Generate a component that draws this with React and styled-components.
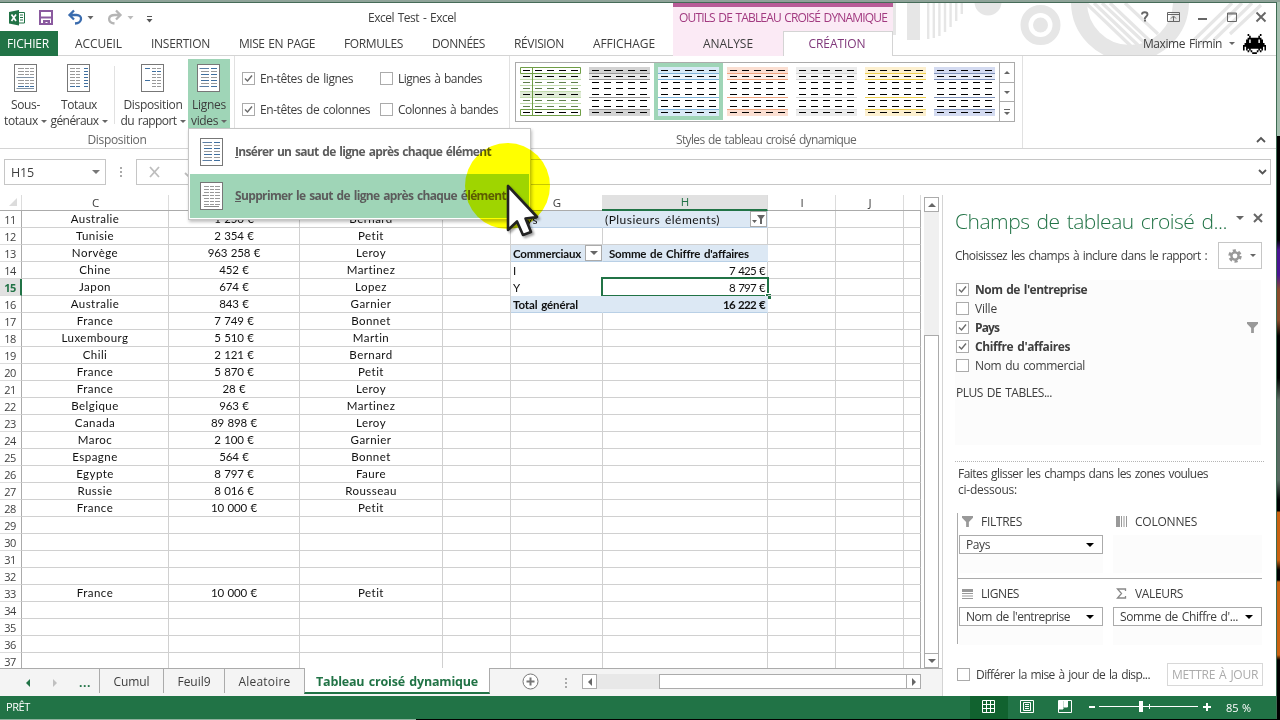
import { useLayoutEffect, useRef, useState } from 'react';
import styled, { createGlobalStyle, css } from 'styled-components';

const GlobalStyle = createGlobalStyle`
  * {
    box-sizing: border-box;
  }

  body {
    margin: 0;
    background: #000;
    overflow: hidden;
  }
`;

const UI_FONT = '"Open Sans", "Noto Sans", sans-serif';
const CELL_FONT = 'Lato, "Open Sans", sans-serif';

// ---------- Shared parts ----------

const Text = styled.span`
  display: inline-block;
  flex: none;
  white-space: pre;
  word-spacing: 0.1em;
  font-size: ${(p) => p.$size || 12}px;
  font-weight: ${(p) => (p.$bold ? 700 : p.$light ? 300 : 400)};
  color: ${(p) => p.$color || 'inherit'};
`;

// Spreads the letters so that a label keeps the same width with any fallback font
function Label({ w, children, ...props }) {
  const ref = useRef(null);
  const [spacing, setSpacing] = useState(0);

  useLayoutEffect(() => {
    if (!w) return;
    const natural = ref.current.getBoundingClientRect().width;
    setSpacing((w - natural) / ref.current.textContent.length);
  }, [w]);

  return (
    <Text ref={ref} style={{ letterSpacing: `${spacing}px` }} {...props}>
      {children}
    </Text>
  );
}

const Arrow = styled.i`
  flex: none;
  width: 0;
  height: 0;
  border: ${(p) => p.$size || 3}px solid transparent;
  ${(p) =>
    ({
      up: css`border-top: 0; border-bottom-color: ${p.$color || '#666'};`,
      down: css`border-bottom: 0; border-top-color: ${p.$color || '#666'};`,
      left: css`border-left: 0; border-right-color: ${p.$color || '#666'};`,
      right: css`border-right: 0; border-left-color: ${p.$color || '#666'};`,
    })[p.$dir || 'down']}
`;

const Box = styled.span`
  flex: none;
  display: flex;
  width: 13px;
  height: 13px;
  border: 1px solid #ababab;
  background: #fff;
`;

function Check({ on }) {
  return (
    <Box>
      {on && (
        <svg width="11" height="11" viewBox="0 0 11 11">
          <path d="M2 5.5 L4.5 8 L9 2.5" fill="none" stroke="#6a6a6a" strokeWidth="1.4" />
        </svg>
      )}
    </Box>
  );
}

const Desktop = styled.div`
  position: relative;
  display: flex;
  width: 1280px;
  height: 720px;
  padding: 2px 0 0;
  overflow: hidden;
  font-family: ${UI_FONT};
  color: #3e3e3e;
  background: linear-gradient(
    #8fa399 0 2px, #a5c0b0 2px 136px, #000 136px 240px, #4a1590 250px 275px, #8a4a2a 290px 320px,
    #000 336px 378px, #5a6b62 400px 480px, #000 500px 511px, #c9600f 512px 560px, #000 570px 580px,
    #c9600f 582px 655px, #000 660px
  );
`;

const Window = styled.div`
  display: flex;
  flex-direction: column;
  width: 1277px;
  height: 717px;
  border-top: 1px solid #456b58;
  border-right: 1px solid #3d6b52;
  background: #fff;
`;

// ---------- Title bar and tabs ----------

const Header = styled.header`
  position: relative;
  flex: none;
  display: flex;
  height: 53px;
  border-bottom: 1px solid #d4d4d4;
`;

const Backdrop = styled.svg`
  position: absolute;
  top: 0;
  left: 0;
`;

const HeaderMain = styled.div`
  width: 673px;
`;

const TitleRow = styled.div`
  display: flex;
  align-items: center;
  height: 28px;
`;

const QuickBar = styled.div`
  display: flex;
  width: 368px;
`;

const TabRow = styled.div`
  display: flex;
  height: 25px;
`;

const Tab = styled.div`
  display: flex;
  align-items: center;
  justify-content: center;
  width: ${(p) => p.$w}px;
  height: 25px;
  ${(p) => p.$file && css`
    margin-right: 2.5px;
    padding-right: 2px;
    color: #fff;
    background: #217346;
  `}
  ${(p) => p.$active && css`
    position: relative;
    padding: 0 2px 2px 0;
    color: #80397b;
    background: #fff;
    border: 1px solid #d4d4d4;
    border-bottom: 0;
  `}
`;

const ContextTabs = styled.div`
  position: relative;
  width: 220px;
  height: 53px;
  border-top: 4px solid #b85c97;
  background: #fbeaf5;
`;

const ContextTitle = styled.div`
  display: flex;
  align-items: center;
  justify-content: center;
  height: 24px;
  padding-bottom: 3px;
  color: #a23a80;
`;

const HeaderSide = styled.div`
  position: relative;
  flex: 1;
`;

const WindowButtons = styled.div`
  position: relative;
  display: flex;
  align-items: center;
  justify-content: flex-end;
  height: 28px;
  padding-right: 7px;
`;

const Account = styled.div`
  position: relative;
  display: flex;
  align-items: center;
  justify-content: flex-end;
  height: 25px;
  padding-right: 10px;
`;

const UserArrow = styled.span`
  display: flex;
  padding: 0 8px 0 7px;
`;

const tabs = [
  ['ACCUEIL', 76, 47],
  ['INSERTION', 88, 59],
  ['MISE EN PAGE', 105, 76],
  ['FORMULES', 88, 59],
  ['DONNÉES', 82, 53],
  ['RÉVISION', 79, 50],
  ['AFFICHAGE', 91, 62],
];

function QuickIcons() {
  return (
    <svg width="160" height="26" viewBox="0 0 160 26">
      {/* Excel */}
      <path d="M9 8 L19 6 V21.5 L9 19.5 Z" fill="#217346" />
      <path d="M19 8.5 H24.5 V19 H19" fill="#fff" stroke="#217346" />
      <path d="M20 11 h3 M20 13.5 h3 M20 16 h3" stroke="#217346" />
      <path d="M11.5 10.5 L16 17 M16 10.5 L11.5 17" stroke="#fff" strokeWidth="1.7" />
      {/* Save */}
      <path d="M40 7 H52 V20 H40 Z" fill="#fff" stroke="#8a5a9f" strokeWidth="2" />
      <path d="M40 13.5 H52" stroke="#8a5a9f" strokeWidth="2" />
      <path d="M43 16 H50 V21 H47.5 V18 H45.5 V21 H43 Z" fill="#8a5a9f" />
      {/* Undo, redo */}
      <path d="M74 6.5 L69.5 11 L74 15.5 M70 11 H76.5 C83 11 82.5 19 75 19.5" fill="none" stroke="#3a6cae" strokeWidth="2.3" />
      <path d="M87.5 12 h6 l-3 3.5z" fill="#666" />
      <path d="M116 6.5 L120.5 11 L116 15.5 M120 11 H115 C107.5 11 107 18.5 114.5 19.5" fill="none" stroke="#b5b5b5" strokeWidth="2.3" />
      <path d="M127.5 12 h6 l-3 3.5z" fill="#bbb" />
      <path d="M147 12.5 h5" stroke="#555" />
      <path d="M146.5 15 h6 l-3 3.5z" fill="#555" />
    </svg>
  );
}

function HeaderPattern() {
  return (
    <Backdrop width="383" height="52" viewBox="893 3 383 52" fill="#e6e6e6">
      <path d="M893 3h3v32h-3z M907 3h13v37h-13z" />
      {[36, 35, 33, 29, 24, 18, 11].map((h, i) => (
        <rect key={h} x={927 + i * 5.6} y="3" width="2.4" height={h} />
      ))}
      <circle cx="988" cy="2" r="13.5" />
      <circle cx="1040.5" cy="25" r="16" fill="none" stroke="#e6e6e6" strokeWidth="8" />
      <circle cx="1040.5" cy="25" r="7.5" />
      <circle cx="1130" cy="2" r="51" fill="none" stroke="#e6e6e6" strokeWidth="16" />
      <g stroke="#e6e6e6" strokeWidth="3.2">
        <path d="M1086 3 L1134 49 M1094 3 L1140 47 M1102 3 L1148 46 M1110 3 L1151 42 M1125 3 L1158 34" />
        <path d="M1193 41 L1232 3 M1200 44 L1242 3 M1214 40 L1252 3 M1230 34 L1261 5" />
      </g>
    </Backdrop>
  );
}

// User picture: a small pixel sprite
const sprite = [
  '000100000001000',
  '000010000010000',
  '000111111111000',
  '001101111101100',
  '001101111101100',
  '011111111111110',
  '111111111111111',
  '101111111111101',
  '101010000010101',
  '000101000101000',
  '000000111000000',
];

function Invader() {
  return (
    <svg width="23" height="20" viewBox="0 0 15 11" preserveAspectRatio="none">
      <path
        d={sprite.map((r, y) => [...r].map((c, x) => (c === '1' ? `M${x} ${y}h1.05v1.05h-1.05z` : '')).join('')).join('')}
      />
    </svg>
  );
}

function TopBar() {
  return (
    <Header>
      <HeaderMain>
        <TitleRow>
          <QuickBar>
            <QuickIcons />
          </QuickBar>
          <Label w={88}>Excel Test - Excel</Label>
        </TitleRow>
        <TabRow>
          <Tab $w={58} $file><Label w={42}>FICHIER</Label></Tab>
          {tabs.map(([name, width, w]) => (
            <Tab key={name} $w={width}><Label w={w}>{name}</Label></Tab>
          ))}
        </TabRow>
      </HeaderMain>
      <ContextTabs>
        <ContextTitle><Label w={208}>OUTILS DE TABLEAU CROISÉ DYNAMIQUE</Label></ContextTitle>
        <TabRow>
          <Tab $w={110}><Label w={50}>ANALYSE</Label></Tab>
          <Tab $w={110} $active><Label w={57}>CRÉATION</Label></Tab>
        </TabRow>
      </ContextTabs>
      <HeaderSide>
        <HeaderPattern />
        <WindowButtons>
          <svg width="130" height="28" viewBox="1139 3 130 28" fill="none" stroke="#666">
            <path d="M1142 14.5 C1142 11.5 1147.5 11.5 1147.5 14.5 C1147.5 16.5 1144.8 16.5 1144.8 19" strokeWidth="1.9" />
            <path d="M1144 20.5 h2" strokeWidth="2" />
            <path d="M1167.5 12.5 h12 v9 h-12z M1167.5 14.5 h12 M1173.5 21 v-4.5 M1171 18.5 l2.5 -2.5 l2.5 2.5" />
            <path d="M1198 19 h9" strokeWidth="2" />
            <path d="M1227.5 13 h9 v8.5 h-9z M1227 14 h10" />
            <path d="M1256.5 12.5 l9 9 M1265.5 12.5 l-9 9" strokeWidth="1.9" />
          </svg>
        </WindowButtons>
        <Account>
          <Label w={79}>Maxime Firmin</Label>
          <UserArrow><Arrow /></UserArrow>
          <Invader />
        </Account>
      </HeaderSide>
    </Header>
  );
}

// ---------- Ribbon ----------

const Ribbon = styled.section`
  position: relative;
  flex: none;
  display: flex;
  height: 93px;
  border-bottom: 1px solid #d4d4d4;
`;

const Group = styled.div`
  display: flex;
  flex-direction: column;
  justify-content: space-between;
  width: ${(p) => p.$w}px;
  padding: 3px 0 1px;
  border-right: 1px solid #e1e1e1;
`;

const GroupLabel = styled.div`
  display: flex;
  justify-content: center;
  line-height: 15px;
  color: #666;
`;

const BigButtons = styled.div`
  display: flex;
`;

const BigButton = styled.div`
  display: flex;
  flex-direction: column;
  align-items: center;
  width: ${(p) => p.$w}px;
  height: 70px;
  padding-top: 5px;
  margin-left: ${(p) => p.$left || 0}px;
  line-height: 16px;
  background: ${(p) => (p.$on ? '#9fd5b7' : 'none')};

  svg {
    margin: 0 1px 5px 0;
  }
`;

const WithArrow = styled.span`
  display: flex;
  align-items: center;
  gap: 3px;
`;

const Divider = styled.i`
  width: 1px;
  height: 58px;
  margin: 7px 0 0 4px;
  background: #e1e1e1;
`;

const Options = styled.div`
  display: grid;
  grid-template-columns: 138px 1fr;
  grid-auto-rows: 31px;
  padding: 4px 0 0 7px;
`;

const Option = styled.label`
  display: flex;
  align-items: center;
  gap: 5px;
`;

const Gallery = styled.div`
  display: flex;
  width: 500px;
  height: 60px;
  margin: 3px 0 0 5px;
  border: 1px solid #ababab;
`;

const Thumb = styled.div`
  display: flex;
  justify-content: center;
  width: 69px;
  height: 57px;
  border: 4px solid ${(p) => (p.$on ? '#9fd5b7' : 'transparent')};
`;

const GallerySide = styled.div`
  display: grid;
  grid-template-rows: 20px 19px 19px;
  width: 15px;
  border-left: 1px solid #ababab;
`;

const GalleryButton = styled.div`
  display: flex;
  flex-direction: column;
  align-items: center;
  justify-content: center;
  gap: 2px;
  border-bottom: 1px solid #ababab;

  &:last-child {
    border-bottom: 0;
  }
`;

const Bar = styled.i`
  width: 6px;
  height: 1px;
  background: #666;
`;

const Collapse = styled.div`
  display: flex;
  flex: 1;
  align-items: flex-end;
  justify-content: flex-end;
  padding: 0 10px 4px 0;
`;

const iconColumns = {
  sub: [[4, 6], [11, 4], [16, 4]],
  totals: [[3, 5], [9, 4], [17, 4]],
  layout: [[4, 5], [11, 4], [16, 4]],
  blank: [[4, 8], [14, 6]],
  dense: [[4, 5], [10, 4], [15, 5]],
};

function isBlue(kind, row, col) {
  if (kind === 'sub') return row === 3 || row === 6;
  if (kind === 'totals') return col === 2 || row === 6;
  if (kind === 'layout') return col === 0 || row === 1;
  return kind === 'blank' && row % 2 === 0;
}

function PageIcon({ kind }) {
  return (
    <svg width="23" height="28" viewBox="0 0 23 28">
      <rect x="0.5" y="0.5" width="22" height="27" fill="#fff" stroke="#777" />
      {[4, 7, 10, 13, 16, 19, 22].map((y, row) =>
        iconColumns[kind].map(([x, w], col) => {
          if (kind === 'layout' && col === 0 && row !== 0 && row !== 4) return null;
          return (
            <rect key={`${x}-${y}`} x={x} y={y} width={w} height="1" fill={isBlue(kind, row, col) ? '#3f6f9f' : '#999'} />
          );
        })
      )}
      {kind === 'sub' && <path d="M2.5 13.5 H20 M2.5 24.5 H20" stroke="#7f92a6" />}
      {kind === 'blank' && <path d="M2.5 4.5 H12 M2.5 22.5 H12" stroke="#5b7ea4" />}
      {kind === 'dense' && <path d="M2.5 13.5 H6 M4 24.5 h15" stroke="#888" />}
    </svg>
  );
}

const styles = [
  { fill: '#fff', line: '#6f9e45', green: true },
  { fill: '#d3d3d3', line: '#999' },
  { fill: '#d9eaf6', line: '#7fb3d9', on: true },
  { fill: '#fbdfd2', line: '#f0a581' },
  { fill: '#ececec', line: '#d8d8d8' },
  { fill: '#fdf0cf', line: '#efd04f' },
  { fill: '#d4dbf1', line: '#8093ba' },
];

function StyleThumb({ fill, line, green }) {
  return (
    <svg width="61" height="49" viewBox="0 0 61 49">
      <rect width="61" height="7" fill={fill} />
      <rect y="7" width="61" height="6" fill={green ? '#e6efdf' : fill} opacity=".5" />
      <rect y="42" width="61" height="7" fill={fill} />
      {green ? (
        <g fill="none" stroke={line}>
          <path d="M0 12.5 H61 M0 18.5 H61 M0 24.5 H61 M0 30.5 H61 M0 36.5 H61" stroke="#c3dcae" />
          <path d="M0 27.5 H61" stroke="#e0ebd7" strokeWidth="5" />
          <path d="M.5 .5 H60.5 V6.5 H.5 Z M.5 42.5 H60.5 V48.5 H.5 Z M12.5 0 V49" />
        </g>
      ) : (
        <path d="M0 6.5 H61 M0 12.5 H61 M0 30.5 H61 M0 42.5 H61" stroke={line} />
      )}
      {[0, 1, 2, 3, 4, 5, 6, 7].map((r) => (
        <path
          key={r}
          d={`M3 ${3.5 + r * 6} h55`}
          stroke={green && [2, 3, 5, 6].includes(r) ? '#5f7f4c' : '#000'}
          strokeDasharray="7 5"
        />
      ))}
    </svg>
  );
}

function RibbonBar() {
  return (
    <Ribbon>
      <Group $w={235}>
        <BigButtons>
          <BigButton $w={45} $left={3}>
            <PageIcon kind="sub" />
            <Label w={29}>Sous-</Label>
            <WithArrow><Label w={34}>totaux</Label><Arrow /></WithArrow>
          </BigButton>
          <BigButton $w={62}>
            <PageIcon kind="totals" />
            <Label w={36}>Totaux</Label>
            <WithArrow><Label w={48}>généraux</Label><Arrow /></WithArrow>
          </BigButton>
          <Divider />
          <BigButton $w={66} $left={5}>
            <PageIcon kind="layout" />
            <Label w={59}>Disposition</Label>
            <WithArrow><Label w={56}>du rapport</Label><Arrow /></WithArrow>
          </BigButton>
          <BigButton $w={42} $left={2} $on>
            <PageIcon kind="blank" />
            <Label w={34}>Lignes</Label>
            <WithArrow><Label w={27}>vides</Label><Arrow /></WithArrow>
          </BigButton>
        </BigButtons>
        <GroupLabel><Label w={59}>Disposition</Label></GroupLabel>
      </Group>
      <Group $w={275}>
        <Options>
          <Option><Check on /><Label w={93}>En-têtes de lignes</Label></Option>
          <Option><Check /><Label w={84}>Lignes à bandes</Label></Option>
          <Option><Check on /><Label w={110}>En-têtes de colonnes</Label></Option>
          <Option><Check /><Label w={100}>Colonnes à bandes</Label></Option>
        </Options>
      </Group>
      <Group $w={513}>
        <Gallery>
          {styles.map((s) => (
            <Thumb key={s.line} $on={s.on}><StyleThumb {...s} /></Thumb>
          ))}
          <GallerySide>
            <GalleryButton><Arrow $dir="up" /></GalleryButton>
            <GalleryButton><Arrow /></GalleryButton>
            <GalleryButton><Bar /><Arrow /></GalleryButton>
          </GallerySide>
        </Gallery>
        <GroupLabel><Label w={180}>Styles de tableau croisé dynamique</Label></GroupLabel>
      </Group>
      <Collapse>
        <svg width="10" height="8" viewBox="0 0 10 8">
          <path d="M1 6 L5 2 L9 6" fill="none" stroke="#555" strokeWidth="1.8" />
        </svg>
      </Collapse>
      <BlankRowsMenu />
    </Ribbon>
  );
}

// ---------- Drop-down menu ----------

const Menu = styled.div`
  position: absolute;
  z-index: 3;
  top: 72px;
  left: 188px;
  width: 343px;
  padding: 1px 1px;
  border: 1px solid #c6c6c6;
  background: #fff;
  box-shadow: 1px 2px 3px rgba(0, 0, 0, 0.25);
`;

const MenuItem = styled.div`
  display: flex;
  align-items: center;
  gap: 12px;
  height: 44px;
  padding: 0 0 0 10px;
  color: #5c5c5c;
  background: ${(p) => (p.$on ? '#9fd5b7' : '#fff')};

  span {
    margin-bottom: 2px;
  }
`;

function BlankRowsMenu() {
  return (
    <Menu>
      <MenuItem>
        <PageIcon kind="blank" />
        <Label w={256} $bold><u>I</u>nsérer un saut de ligne après chaque élément</Label>
      </MenuItem>
      <MenuItem $on>
        <PageIcon kind="dense" />
        <Label w={271} $bold><u>S</u>upprimer le saut de ligne après chaque élément</Label>
      </MenuItem>
    </Menu>
  );
}

// Yellow halo around the mouse pointer
const Halo = styled.div`
  position: absolute;
  z-index: 4;
  top: 143px;
  left: 465px;
  width: 85px;
  height: 86px;
  border-radius: 50%;
  background: #ff0;
  mix-blend-mode: multiply;
`;

const Pointer = styled.svg`
  position: absolute;
  z-index: 5;
  top: 182px;
  left: 503px;
  filter: drop-shadow(2px 2px 1px rgba(0, 0, 0, 0.35));
`;

// ---------- Formula bar ----------

const FormulaBar = styled.div`
  flex: none;
  display: flex;
  height: 46px;
  padding: 10px 5px 10px 4px;
`;

const Field = styled.div`
  display: flex;
  align-items: center;
  justify-content: space-between;
  width: ${(p) => (p.$w ? `${p.$w}px` : 'auto')};
  flex: ${(p) => (p.$w ? 'none' : 1)};
  padding: 0 2px 0 6px;
  border: 1px solid #c6c6c6;

  > i {
    margin-right: 3px;
  }
`;

const Grip = styled.div`
  display: flex;
  flex-direction: column;
  align-items: center;
  justify-content: center;
  gap: 2px;
  width: ${(p) => p.$w}px;

  i {
    width: 2px;
    height: 2px;
    background: #aaa;
  }
`;

function FormulaRow() {
  return (
    <FormulaBar>
      <Field $w={102}>
        <Label w={23} $size={12.5}>H15</Label>
        <Arrow $size={4} $color="#777" />
      </Field>
      <Grip $w={30}><i /><i /><i /></Grip>
      <Field>
        <svg width="60" height="14" viewBox="0 0 60 14" fill="none" stroke="#bdbdbd" strokeWidth="1.8">
          <path d="M7 2 L16 12 M16 2 L7 12 M42 8 L45 11 L51 3" />
        </svg>
        <svg width="10" height="8" viewBox="0 0 10 8">
          <path d="M1 2 L4.5 5.5 L8 2" fill="none" stroke="#555" strokeWidth="1.8" />
        </svg>
      </Field>
    </FormulaBar>
  );
}

// ---------- Sheet ----------

const Body = styled.div`
  display: flex;
  flex: none;
  height: 501px;
`;

const SheetArea = styled.div`
  display: flex;
  flex-direction: column;
  width: 942px;
`;

const SheetTop = styled.div`
  display: flex;
  height: 473px;
  overflow: hidden;
`;

const Grid = styled.div`
  width: 921px;
  font-family: ${CELL_FONT};
`;

const HeadRow = styled.div`
  display: flex;
  height: 16px;
  border-bottom: 1px solid #ababab;
  font-family: ${UI_FONT};
`;

const HeadCell = styled.div`
  display: flex;
  align-items: center;
  justify-content: center;
  width: ${(p) => p.$w}px;
  height: ${(p) => (p.$on ? 16 : 15)}px;
  padding: 0 0 1px 1px;
  font-size: 11.5px;
  border-right: 1px solid #dcdcdc;
  ${(p) => p.$on && css`
    margin-left: -1px;
    width: ${p.$w + 1}px;
    color: #217346;
    background: #e1e1e1;
    border-bottom: 2px solid #217346;
  `}
`;

const Corner = styled.div`
  display: flex;
  align-items: flex-end;
  justify-content: flex-end;
  width: 22px;
  padding: 0 4px 4px 0;
  border-right: 1px solid #dcdcdc;

  i {
    border: 4px solid #dcdcdc;
    border-top-color: transparent;
    border-left-color: transparent;
  }
`;

const Row = styled.div`
  display: flex;
  height: 17px;
`;

const RowHead = styled.div`
  display: flex;
  align-items: center;
  justify-content: flex-end;
  width: 22px;
  padding: 1px 5px 0 0;
  font-family: ${UI_FONT};
  font-size: 11px;
  letter-spacing: -0.4px;
  border-right: 1px solid #ababab;
  border-bottom: 1px solid #dcdcdc;
  ${(p) => p.$on && css`
    padding-right: 4px;
    font-weight: 700;
    color: #217346;
    background: #e1e1e1;
    border-right: 2px solid #217346;
  `}
`;

const Cell = styled.div`
  position: relative;
  display: flex;
  align-items: center;
  justify-content: ${(p) => p.$align || 'center'};
  width: ${(p) => p.$w}px;
  padding: 0 2px ${(p) => (p.$align ? 0 : 2)}px;
  color: #111;
  font-size: 11.5px;
  letter-spacing: ${(p) => (p.$num ? -0.1 : 0.45)}px;
  word-spacing: ${(p) => (p.$num ? 0.5 : 0)}px;
  white-space: pre;
  border-right: 1px solid #d0d0d0;
  border-bottom: 1px solid #d0d0d0;
  ${(p) => p.$plain && css`
    border-color: #fff;
  `}
  ${(p) => p.$edge && css`
    border-right-color: #ababab;
  `}
  ${(p) => p.$last && css`
    border-right-color: #d0d0d0;
  `}
  ${(p) => p.$fill && css`
    background: #dce8f4;
    border-color: #dce8f4;
    border-bottom-color: #b9d0e6;
  `}
`;

const Selection = styled.i`
  position: absolute;
  inset: -2px;
  border: 2px solid #217346;

  &::after {
    content: '';
    position: absolute;
    right: -4px;
    bottom: -4px;
    width: 5px;
    height: 5px;
    background: #217346;
    outline: 1px solid #fff;
  }
`;

const FilterButton = styled.span`
  position: absolute;
  top: 0;
  right: 0;
  display: flex;
  align-items: center;
  justify-content: center;
  width: 17px;
  height: 16px;
  border: 1px solid #ababab;
  background: #fff;
`;

const Indent = styled.span`
  padding-left: 4px;
`;

const columns = [
  ['C', 147],
  ['D', 131],
  ['E', 143],
  ['F', 68],
  ['G', 92],
  ['H', 165],
  ['I', 68],
  ['J', 68],
  ['', 17],
];

const data = {
  11: ['Australie', '1 250 €', 'Bernard'],
  12: ['Tunisie', '2 354 €', 'Petit'],
  13: ['Norvège', '963 258 €', 'Leroy'],
  14: ['Chine', '452 €', 'Martinez'],
  15: ['Japon', '674 €', 'Lopez'],
  16: ['Australie', '843 €', 'Garnier'],
  17: ['France', '7 749 €', 'Bonnet'],
  18: ['Luxembourg', '5 510 €', 'Martin'],
  19: ['Chili', '2 121 €', 'Bernard'],
  20: ['France', '5 870 €', 'Petit'],
  21: ['France', '28 €', 'Leroy'],
  22: ['Belgique', '963 €', 'Martinez'],
  23: ['Canada', '89 898 €', 'Leroy'],
  24: ['Maroc', '2 100 €', 'Garnier'],
  25: ['Espagne', '564 €', 'Bonnet'],
  26: ['Egypte', '8 797 €', 'Faure'],
  27: ['Russie', '8 016 €', 'Rousseau'],
  28: ['France', '10 000 €', 'Petit'],
  33: ['France', '10 000 €', 'Petit'],
};

const rowNumbers = Array.from({ length: 27 }, (_, i) => i + 11);

function PivotCells({ row }) {
  if (row === 11) {
    return (
      <>
        <Cell $w={92} $fill $align="flex-start"><Label w={25} $size={11.5}>Pays</Label></Cell>
        <Cell $w={165} $fill $align="flex-start">
          <Label w={115} $size={12}>(Plusieurs éléments)</Label>
          <FilterButton>
            <svg width="13" height="11" viewBox="0 0 13 11">
              <path d="M5 1 H13 L10 5 V10 H8 V5 Z M0 6 h5 l-2.5 3z" fill="#666" />
            </svg>
          </FilterButton>
        </Cell>
      </>
    );
  }
  if (row === 13) {
    return (
      <>
        <Cell $w={92} $fill $align="flex-start">
          <Label w={68} $bold $size={11.5}>Commerciaux</Label>
          <FilterButton><Arrow $size={4} /></FilterButton>
        </Cell>
        <Cell $w={165} $fill $align="flex-start">
          <Indent><Label w={139} $bold $size={11.5}>Somme de Chiffre d'affaires</Label></Indent>
        </Cell>
      </>
    );
  }
  if (row === 14 || row === 15) {
    return (
      <>
        <Cell $w={92} $plain $align="flex-start">{row === 14 ? 'I' : 'Y'}</Cell>
        <Cell $w={165} $plain $last $align="flex-end">
          <Label w={36} $size={11.5}>{row === 14 ? '7 425 €' : '8 797 €'}</Label>
          {row === 15 && <Selection />}
        </Cell>
      </>
    );
  }
  return (
    <>
      <Cell $w={92} $fill $align="flex-start"><Label w={65} $bold $size={11.5}>Total général</Label></Cell>
      <Cell $w={165} $fill $align="flex-end"><Label w={42} $bold $size={11.5}>16 222 €</Label></Cell>
    </>
  );
}

const VScroll = styled.div`
  display: flex;
  flex-direction: column;
  width: 15px;
  margin: 2px 0 0 3px;
  background: #f0f0f0;
`;

const ScrollButton = styled.div`
  flex: none;
  display: flex;
  align-items: center;
  justify-content: center;
  width: 15px;
  height: 15px;
  border: 1px solid #ababab;
  background: #fff;
`;

const VThumb = styled.div`
  flex: 1;
  margin-top: 123px;
  border: 1px solid #ababab;
  border-bottom: 0;
  background: #fff;
`;

function Sheet() {
  return (
    <SheetTop>
      <Grid>
        <HeadRow>
          <Corner><i /></Corner>
          {columns.map(([name, w]) => (
            <HeadCell key={name} $w={w} $on={name === 'H'}>{name}</HeadCell>
          ))}
        </HeadRow>
        {rowNumbers.map((n) => {
          const cells = data[n] || [];
          const pivot = [11, 13, 14, 15, 16].includes(n);
          return (
            <Row key={n}>
              <RowHead $on={n === 15}>{n}</RowHead>
              <Cell $w={147}>{cells[0]}</Cell>
              <Cell $w={131} $num>{cells[1]}</Cell>
              <Cell $w={143}>{cells[2]}</Cell>
              <Cell $w={68} />
              {pivot ? <PivotCells row={n} /> : <><Cell $w={92} /><Cell $w={165} /></>}
              <Cell $w={68} />
              <Cell $w={68} />
              <Cell $w={17} $edge />
            </Row>
          );
        })}
      </Grid>
      <VScroll>
        <ScrollButton><Arrow $dir="up" $size={4} /></ScrollButton>
        <VThumb />
        <ScrollButton><Arrow $size={4} /></ScrollButton>
      </VScroll>
    </SheetTop>
  );
}

// ---------- Sheet tabs ----------

const SheetTabs = styled.div`
  display: flex;
  height: 28px;
  background: #f4f4f4;
  border-top: 1px solid #ababab;
`;

const TabNav = styled.div`
  display: flex;
  align-items: center;
  justify-content: space-between;
  width: 99px;
  padding: 0 8px 0 26px;
  font-weight: 700;
  color: #217346;
`;

const SheetTab = styled.div`
  display: flex;
  align-items: center;
  justify-content: center;
  width: ${(p) => p.$w}px;
  height: 24px;
  border-left: 1px solid #ababab;
  ${(p) => p.$active && css`
    margin-top: -1px;
    height: 26px;
    padding-top: 2px;
    color: #217346;
    background: #fff;
    border-right: 1px solid #ababab;
    border-bottom: 2px solid #217346;
  `}
`;

const AddSheet = styled.svg`
  margin: 4px 23px 0 32px;
`;

const HScroll = styled.div`
  display: flex;
  width: 339px;
  height: 15px;
  margin: 5px 0 0 12px;
  background: #e8e8e8;
`;

const HThumb = styled.div`
  width: 248px;
  margin-left: 62px;
  border: 1px solid #ababab;
  border-right: 0;
  background: #fff;
`;

function TabsBar() {
  return (
    <SheetTabs>
      <TabNav>
        <Arrow $dir="left" $size={4} $color="#217346" />
        <Arrow $dir="right" $size={4} $color="#c0c0c0" />
        <Label w={12} $bold>...</Label>
      </TabNav>
      <SheetTab $w={64}><Label w={36}>Cumul</Label></SheetTab>
      <SheetTab $w={61}><Label w={33}>Feuil9</Label></SheetTab>
      <SheetTab $w={80}><Label w={52}>Aleatoire</Label></SheetTab>
      <SheetTab $w={186} $active><Label w={162} $bold $size={12.5}>Tableau croisé dynamique</Label></SheetTab>
      <AddSheet width="17" height="17" viewBox="0 0 17 17" fill="none" stroke="#777">
        <circle cx="8.5" cy="8.5" r="7.5" fill="#fff" />
        <path d="M8.5 4.5 V12.5 M4.5 8.5 H12.5" strokeWidth="2" />
      </AddSheet>
      <Grip $w={8}><i /><i /><i /></Grip>
      <HScroll>
        <ScrollButton><Arrow $dir="left" $size={4} /></ScrollButton>
        <HThumb />
        <ScrollButton><Arrow $dir="right" $size={4} /></ScrollButton>
      </HScroll>
    </SheetTabs>
  );
}

// ---------- Field list ----------

const Pane = styled.aside`
  display: flex;
  flex-direction: column;
  flex: 1;
  padding: 10px 12px 0 12px;
  border-left: 1px solid #d4d4d4;
`;

const PaneTitle = styled.div`
  display: flex;
  align-items: center;
  height: 32px;
  color: #217346;
`;

const PaneTools = styled.div`
  display: flex;
  align-items: center;
  gap: 9px;
  margin: -6px 0 0 9px;
`;

const PaneIntro = styled.div`
  display: flex;
  align-items: center;
  height: 37px;
  justify-content: space-between;
`;

const GearButton = styled.div`
  display: flex;
  align-items: center;
  justify-content: center;
  gap: 8px;
  width: 44px;
  height: 27px;
  margin-right: 2px;
  border: 1px solid #c6c6c6;

  svg {
    margin-left: 3px;
  }
`;

const FieldList = styled.div`
  height: 165px;
  margin: 6px 3px 0 0;
  background: #fcfcfc;
`;

const FieldRow = styled.div`
  display: flex;
  align-items: center;
  gap: 6px;
  height: 19px;
  padding: 0 3px 0 1px;

  > svg {
    margin-left: auto;
  }
`;

const MoreTables = styled.div`
  padding: 5px 1px;
`;

const DragHint = styled.div`
  display: flex;
  flex-direction: column;
  margin-top: 16px;
  padding: 3px 3px 0;
  border-top: 1px dotted #b5b5b5;
  line-height: 15px;
`;

const Zones = styled.div`
  display: grid;
  grid-template-columns: 145px 1fr;
  grid-template-rows: 66px 65px;
  column-gap: 9px;
  margin: 16px 2px 0 2px;
  border-left: 1px solid #ababab;
  background: linear-gradient(#ababab, #ababab) 0 65px / 100% 1px no-repeat;
`;

const Zone = styled.div`
  padding: ${(p) => (p.$low ? 6 : 0)}px 0 0 1px;
`;

const ZoneTitle = styled.div`
  display: flex;
  align-items: center;
  gap: 8px;
  height: 17px;
  padding-left: 3px;
`;

const ZoneDrop = styled.div`
  height: 38px;
  margin-top: 5px;
  background: #fcfcfc;
`;

const Chip = styled.div`
  display: flex;
  align-items: center;
  justify-content: space-between;
  height: 19px;
  padding: 0 8px 0 6px;
  border: 1px solid #ababab;
  background: #fff;
`;

const PaneFoot = styled.div`
  display: flex;
  align-items: center;
  margin-top: 19px;
  padding: 0 1px 0 2px;
`;

const UpdateButton = styled.div`
  display: flex;
  align-items: center;
  justify-content: center;
  width: 96px;
  height: 23px;
  margin-left: auto;
  color: #ababab;
  border: 1px solid #d8d8d8;
`;

const FootLabel = styled.span`
  display: flex;
  padding-left: 6px;
`;

const fields = [
  ["Nom de l'entreprise", 112, true],
  ['Ville', 22],
  ['Pays', 24, true],
  ["Chiffre d'affaires", 95, true],
  ['Nom du commercial', 110],
];

function Funnel() {
  return (
    <svg width="11" height="11" viewBox="0 0 12 12">
      <path d="M0 0 H12 V2 L7.5 6.5 V12 H4.5 V6.5 L0 2 Z" fill="#999" />
    </svg>
  );
}

function FieldPane() {
  return (
    <Pane>
      <PaneTitle>
        <Label w={272} $size={21} $light>Champs de tableau croisé d...</Label>
        <PaneTools>
          <Arrow $size={4.5} />
          <svg width="10" height="10" viewBox="0 0 10 10">
            <path d="M1 1 L9 9 M9 1 L1 9" stroke="#666" strokeWidth="2" />
          </svg>
        </PaneTools>
      </PaneTitle>
      <PaneIntro>
        <Label w={252}>Choisissez les champs à inclure dans le rapport :</Label>
        <GearButton>
          <svg width="14" height="14" viewBox="0 0 14 14">
            <circle cx="7" cy="7" r="5.2" fill="none" stroke="#999" strokeWidth="3" strokeDasharray="3 2.44" />
            <circle cx="7" cy="7" r="3.6" fill="none" stroke="#999" strokeWidth="2.4" />
          </svg>
          <Arrow $size={3.5} />
        </GearButton>
      </PaneIntro>
      <FieldList>
        {fields.map(([name, w, on]) => (
          <FieldRow key={name}>
            <Check on={on} />
            <Label w={w} $bold={on}>{name}</Label>
            {name === 'Pays' && <Funnel />}
          </FieldRow>
        ))}
        <MoreTables><Label w={96}>PLUS DE TABLES...</Label></MoreTables>
      </FieldList>
      <DragHint>
        <div><Label w={250}>Faites glisser les champs dans les zones voulues</Label></div>
        <div><Label w={59}>ci-dessous:</Label></div>
      </DragHint>
      <Zones>
        <Zone>
          <ZoneTitle><Funnel /><Label w={41}>FILTRES</Label></ZoneTitle>
          <ZoneDrop><Chip><Label w={24}>Pays</Label><Arrow $size={4} $color="#000" /></Chip></ZoneDrop>
        </Zone>
        <Zone>
          <ZoneTitle>
            <svg width="11" height="11" viewBox="0 0 11 11">
              <path d="M0 0h4v11h-4z M5 0h1v11h-1z M7.5 0h1v11h-1z M10 0h1v11h-1z" fill="#999" />
            </svg>
            <Label w={62}>COLONNES</Label>
          </ZoneTitle>
          <ZoneDrop />
        </Zone>
        <Zone $low>
          <ZoneTitle>
            <svg width="11" height="11" viewBox="0 0 11 11">
              <path d="M0 1h11v3h-11z M0 5h11v1h-11z M0 7.5h11v1h-11z M0 10h11v1h-11z" fill="#999" />
            </svg>
            <Label w={38}>LIGNES</Label>
          </ZoneTitle>
          <ZoneDrop><Chip><Label w={104}>Nom de l'entreprise</Label><Arrow $size={4} $color="#000" /></Chip></ZoneDrop>
        </Zone>
        <Zone $low>
          <ZoneTitle>
            <svg width="11" height="11" viewBox="0 0 11 11">
              <path d="M9.5 3 V1 H1.5 L5.5 5.5 L1.5 10 H9.5 V8" fill="none" stroke="#888" strokeWidth="1.3" />
            </svg>
            <Label w={48}>VALEURS</Label>
          </ZoneTitle>
          <ZoneDrop><Chip><Label w={118}>Somme de Chiffre d'...</Label><Arrow $size={4} $color="#000" /></Chip></ZoneDrop>
        </Zone>
      </Zones>
      <PaneFoot>
        <Check />
        <FootLabel><Label w={174}>Différer la mise à jour de la disp...</Label></FootLabel>
        <UpdateButton><Label w={86}>METTRE À JOUR</Label></UpdateButton>
      </PaneFoot>
    </Pane>
  );
}

// ---------- Status bar ----------

const Status = styled.footer`
  flex: none;
  display: flex;
  align-items: center;
  justify-content: space-between;
  height: 23px;
  padding: 0 25px 0 6px;
  color: #fff;
  background: #217346;

  > span {
    margin-bottom: 2px;
  }
`;

const StatusRight = styled.div`
  display: flex;
  align-items: center;
  gap: 15px;
`;

const BottomEdge = styled.div`
  position: absolute;
  top: 719px;
  left: 0;
  width: 416px;
  height: 1px;
  background: #8fb09d;
`;

function StatusBar() {
  return (
    <Status>
      <Label w={24} $size={11}>PRÊT</Label>
      <StatusRight>
        <svg width="241" height="23" viewBox="970 696 241 23" fill="none" stroke="#fff">
          <rect x="970" y="696" width="38" height="23" fill="#11622f" stroke="none" />
          <path d="M982.5 700.5 h12 v12 h-12z M986.5 700 v13 M990.5 700 v13 M982 704.5 h13 M982 708.5 h13" />
          <path d="M1020.5 700.5 h13 v12 h-13z M1023.5 702.5 h7 v8 h-7z M1025 704.5 h4 M1025 706.5 h4 M1025 708.5 h4" />
          <path d="M1058.5 700.5 h13 v12 h-13z" />
          <path d="M1059 701 h4 v8 h-4z M1064 701 h3.5 v6 h-3.5z" fill="#fff" />
          <path d="M1089 707 h6 M1203 707 h8 M1207 703 v8" strokeWidth="2" />
          <path d="M1099 706.5 h99 M1149.5 704 v5" />
          <rect x="1139" y="701" width="4" height="11" fill="#fff" stroke="none" />
        </svg>
        <Label w={25} $size={11}>85 %</Label>
      </StatusRight>
    </Status>
  );
}

function App() {
  return (
    <>
      <GlobalStyle />
      <Desktop>
        <Window>
          <TopBar />
          <RibbonBar />
          <FormulaRow />
          <Body>
            <SheetArea>
              <Sheet />
              <TabsBar />
            </SheetArea>
            <FieldPane />
          </Body>
          <StatusBar />
        </Window>
        <BottomEdge />
        <Halo />
        <Pointer width="44" height="60" viewBox="0 0 44 60">
          <path d="M5 4 L5 48 L14 39.5 L20 53 L28 50 L22.5 36.5 L34 35 Z" fill="#fff" stroke="#222" strokeWidth="2.6" strokeLinejoin="round" />
        </Pointer>
      </Desktop>
    </>
  );
}

export default App;
